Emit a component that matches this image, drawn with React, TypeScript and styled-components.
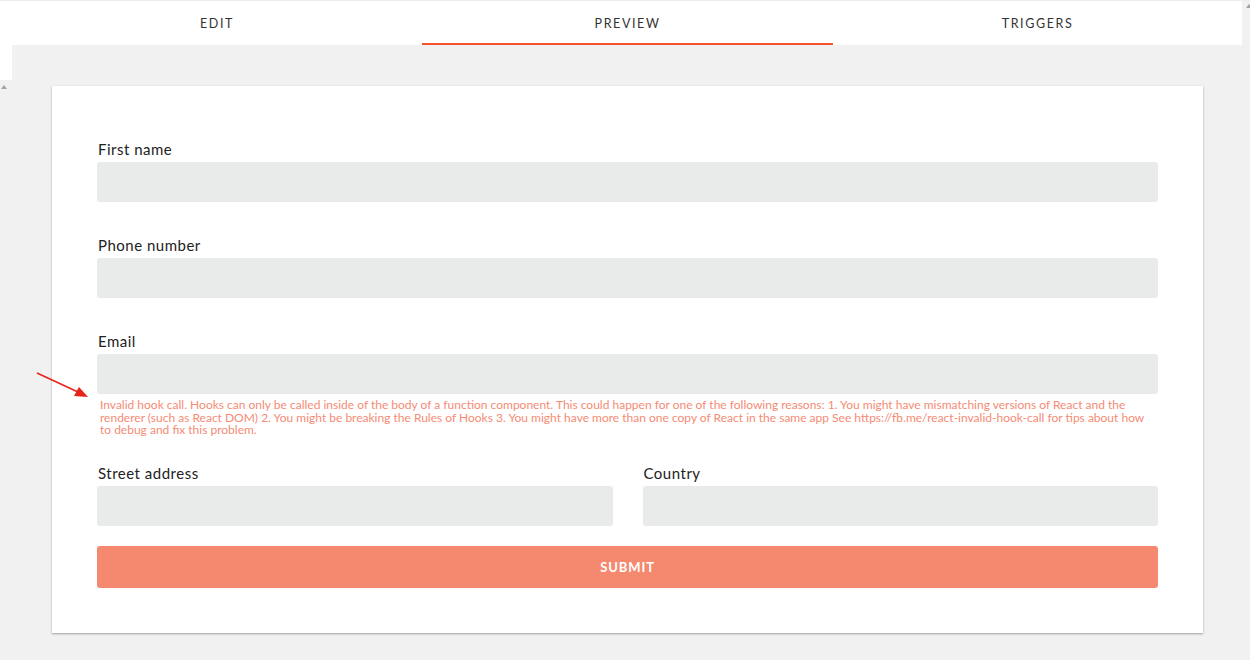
import React from "react";
import styled, { createGlobalStyle } from "styled-components";

const Global = createGlobalStyle`
  html, body { margin: 0; padding: 0; background: #f1f1f1; }
  body { font-family: Lato, "Open Sans", sans-serif; overflow: hidden; }
  * { box-sizing: border-box; }
`;

const Page = styled.div`
  display: flex;
  width: 1250px;
  height: 660px;
  border-top: 1px solid #ececec;
  position: relative;
`;

const LeftRail = styled.div`
  width: 12px;
  display: flex;
  flex-direction: column;
  align-items: center;
`;

const RailBlock = styled.div`
  width: 12px;
  height: 79px;
  background: #fff;
`;

const RailArrow = styled.div<{ $right?: boolean }>`
  width: 0;
  height: 0;
  border-left: 3px solid transparent;
  border-right: 3px solid transparent;
  border-bottom: 4px solid #a3a3a3;
  margin-top: ${(p) => (p.$right ? "3px" : "5px")};
  margin-left: ${(p) => (p.$right ? "4px" : "-4px")};
`;

const Main = styled.div`
  width: 1230px;
  display: flex;
  flex-direction: column;
`;

const RightRail = styled.div`
  width: 8px;
`;

const Tabs = styled.div`
  display: grid;
  grid-template-columns: 410px 411px 409px;
  height: 44px;
  background: #fff;
`;

const Tab = styled.div<{ $active?: boolean }>`
  display: flex;
  align-items: center;
  justify-content: center;
  font-size: 12.5px;
  letter-spacing: 1.6px;
  color: #333;
  text-transform: uppercase;
  padding-top: 2px;
  border-bottom: 2px solid ${(p) => (p.$active ? "#f4532c" : "transparent")};
`;

const Content = styled.div`
  padding: 41px 39px 0 40px;
`;

const Card = styled.form`
  background: #fff;
  box-shadow: 0 1px 2px rgba(0, 0, 0, 0.35);
  padding: 53px 45px 45px 45px;
  display: flex;
  flex-direction: column;
`;

const Field = styled.div<{ $gap?: number }>`
  display: flex;
  flex-direction: column;
  margin-bottom: ${(p) => p.$gap ?? 33}px;
`;

const Label = styled.label`
  font-size: 15px;
  line-height: 20px;
  color: #222;
  padding-left: 1px;
  margin-bottom: 3px;
  letter-spacing: 0.5px;
`;

const Input = styled.div`
  height: 40px;
  background: #e9eaea;
  border-radius: 3px;
`;

const ErrorText = styled.div`
  margin-top: 5px;
  padding-left: 3px;
  font-size: 12px;
  line-height: 12.5px;
  color: #f58b75;
`;

const Row = styled.div`
  display: grid;
  grid-template-columns: 1fr 1fr;
  column-gap: 30px;
  margin-bottom: 20px;
`;

const Submit = styled.div`
  height: 42px;
  border-radius: 3px;
  background: #f5896f;
  color: #fff;
  font-weight: 700;
  font-size: 13px;
  letter-spacing: 0.9px;
  display: flex;
  align-items: center;
  justify-content: center;
`;

const Annotation = styled.svg`
  position: absolute;
  left: 30px;
  top: 364px;
`;

export default function App() {
  return (
    <>
      <Global />
      <Page>
        <LeftRail>
          <RailBlock />
          <RailArrow />
        </LeftRail>
        <Main>
          <Tabs>
            <Tab>Edit</Tab>
            <Tab $active>Preview</Tab>
            <Tab>Triggers</Tab>
          </Tabs>
          <Content>
            <Card>
              <Field>
                <Label>First name</Label>
                <Input />
              </Field>
              <Field>
                <Label>Phone number</Label>
                <Input />
              </Field>
              <Field $gap={26}>
                <Label>Email</Label>
                <Input />
                <ErrorText>
                  Invalid hook call. Hooks can only be called inside of the body of a function component. This could happen for one of the following reasons: 1. You might have mismatching versions of React and the renderer (such as React DOM) 2. You might be breaking the Rules of Hooks 3. You might have more than one copy of React in the same app See https://fb.me/react-invalid-hook-call for tips about how to debug and fix this problem.
                </ErrorText>
              </Field>
              <Row>
                <Field $gap={0}>
                  <Label>Street address</Label>
                  <Input />
                </Field>
                <Field $gap={0}>
                  <Label>Country</Label>
                  <Input />
                </Field>
              </Row>
              <Submit>SUBMIT</Submit>
            </Card>
          </Content>
        </Main>
        <RightRail>
          <RailArrow $right />
        </RightRail>
        <Annotation width="64" height="40" viewBox="0 0 64 40">
          <line x1="7" y1="8" x2="48" y2="27" stroke="#e8231c" strokeWidth="1.6" />
          <polygon points="58,32 44,31 49,22" fill="#e8231c" />
        </Annotation>
      </Page>
    </>
  );
}
